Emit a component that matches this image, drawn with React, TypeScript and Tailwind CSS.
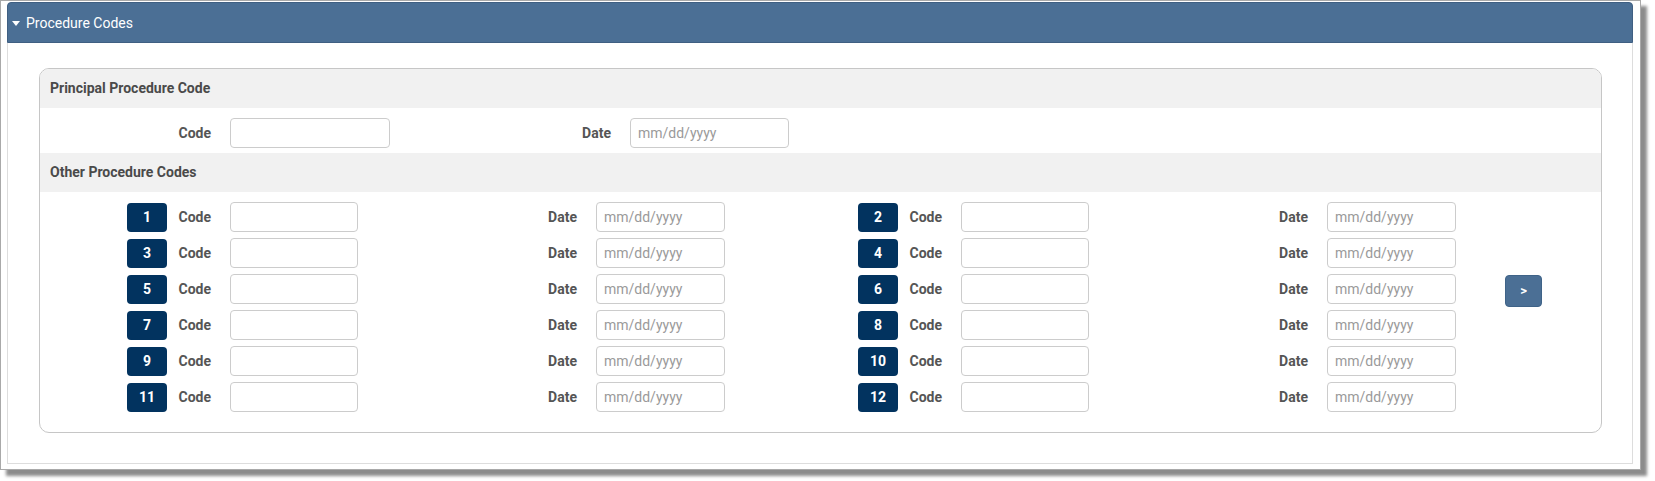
import React from "react";

const labelCls = "text-[14px] font-bold text-[#555555] text-right leading-none";
const inputCls =
  "h-[30px] rounded-[4px] border border-[#cccccc] bg-white px-[7px] text-[14px] text-[#555] placeholder:text-[#9a9a9a] outline-none";

function Pair({ n }: { n: number }) {
  return (
    <div className="flex items-center">
      <div className="flex h-[29px] w-[40px] items-center justify-center rounded-[4px] bg-[#02335f] text-[14px] font-bold text-white">
        {n}
      </div>
      <div className={`${labelCls} w-[44px]`}>Code</div>
      <input type="text" className={`${inputCls} ml-[19px] w-[128px]`} />
      <div className={`${labelCls} w-[219px]`}>Date</div>
      <input type="text" placeholder="mm/dd/yyyy" className={`${inputCls} ml-[19px] w-[129px]`} />
    </div>
  );
}

export default function App() {
  const rows = [
    [1, 2],
    [3, 4],
    [5, 6],
    [7, 8],
    [9, 10],
    [11, 12],
  ];

  return (
    <div className="h-[481px] w-[1655px] bg-white font-['Roboto',sans-serif]">
      <div className="h-[470px] w-[1641px] border border-[#a9a9a9] bg-white pb-[5px] pl-[6px] pr-[7px] pt-[1px] shadow-[6px_6px_3px_rgba(0,0,0,0.45)]">
        <div className="flex h-full flex-col">
          {/* header bar */}
          <div className="flex h-[41px] items-center rounded-t-[4px] border border-[#3f5f82] bg-[#4b6f95] pl-[4px]">
            <span className="mt-[1px] h-0 w-0 border-l-[4px] border-r-[4px] border-t-[5px] border-l-transparent border-r-transparent border-t-white" />
            <span className="ml-[6px] mt-[2px] text-[14px] text-white">Procedure Codes</span>
          </div>

          <div className="flex-1 border-x border-b border-[#dddddd] pb-[29px] pl-[31px] pr-[30px] pt-[25px]">
            <div className="overflow-hidden rounded-[10px] border border-[#c6c6c6]">
              <div className="flex h-[39px] items-center bg-[#f1f1f1] pl-[10px] text-[14px] font-bold text-[#4a4a4a]">
                Principal Procedure Code
              </div>
              <div className="flex h-[45px] items-center pt-[4px]">
                <div className={`${labelCls} w-[171px]`}>Code</div>
                <input type="text" className={`${inputCls} ml-[19px] h-[29px] w-[160px]`} />
                <div className={`${labelCls} w-[221px]`}>Date</div>
                <input type="text" placeholder="mm/dd/yyyy" className={`${inputCls} ml-[19px] h-[29px] w-[159px]`} />
              </div>
              <div className="flex h-[39px] items-center bg-[#f1f1f1] pl-[10px] text-[14px] font-bold text-[#4a4a4a]">
                Other Procedure Codes
              </div>
              <div className="flex pb-[20px] pl-[87px] pt-[10px]">
                <div className="flex flex-col gap-[6px]">
                  {rows.map(([a, b]) => (
                    <div key={a} className="flex items-center">
                      <Pair n={a} />
                      <div className="w-[133px]" />
                      <Pair n={b} />
                    </div>
                  ))}
                </div>
                <div className="ml-[49px] pt-[73px]">
                  <button className="flex h-[32px] w-[37px] items-center justify-center rounded-[4px] border border-[#3f6388] bg-[#4b6f95] text-[13px] font-bold text-white">
                    &gt;
                  </button>
                </div>
              </div>
            </div>
          </div>
        </div>
      </div>
    </div>
  );
}
